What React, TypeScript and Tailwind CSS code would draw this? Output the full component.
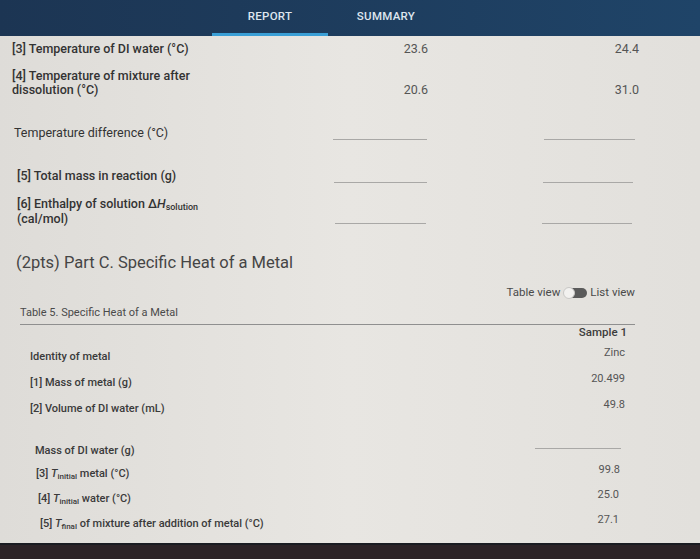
const font = { fontFamily: "Roboto, 'Liberation Sans', sans-serif" };

function Line({ w }: { w: string }) {
  return <div className={`${w} border-b border-[#a9a8a6]`} />;
}

function TSub({ sub }: { sub: string }) {
  return (
    <span>
      <i>T</i>
      <sub className="text-[8px]">{sub}</sub>
    </span>
  );
}

export default function App() {
  return (
    <div
      className="w-[700px] h-[559px] flex flex-col bg-gradient-to-r from-[#dedcd8] via-[#e8e6e2] to-[#e2e0dc] overflow-hidden"
      style={font}
    >
      {/* tab bar */}
      <div className="h-[36px] shrink-0 flex pl-[212px] bg-gradient-to-r from-[#1c3553] to-[#1f4468]">
        <div className="w-[116px] flex flex-col">
          <div className="flex-1 flex items-center justify-center text-[11.5px] font-medium tracking-wide text-[#dfe6ef]">
            REPORT
          </div>
          <div className="h-[3px] bg-[#3a9fd6]" />
        </div>
        <div className="w-[116px] flex items-center justify-center text-[11.5px] font-medium tracking-wide text-[#dfe6ef] pb-[3px]">
          SUMMARY
        </div>
      </div>

      <div className="flex-1 flex flex-col text-[12.5px] text-[#333]">
        {/* part B results */}
        <div className="flex h-[26px] items-center">
          <div className="w-[333px] pl-3 font-medium">[3] Temperature of DI water (°C)</div>
          <div className="w-[95px] text-right text-[#555]">23.6</div>
          <div className="w-[116px]" />
          <div className="w-[95px] text-right text-[#555]">24.4</div>
        </div>

        <div className="flex mt-[7px] items-end leading-[14px]">
          <div className="w-[333px] pl-3 font-medium">
            [4] Temperature of mixture after
            <br />
            dissolution (°C)
          </div>
          <div className="w-[95px] text-right text-[#555]">20.6</div>
          <div className="w-[116px]" />
          <div className="w-[95px] text-right text-[#555]">31.0</div>
        </div>

        <div className="flex mt-[26px] h-[20px] items-center">
          <div className="w-[333px] pl-[14px]">Temperature difference (°C)</div>
          <div className="self-start h-[17px] flex items-end">
            <Line w="w-[94px]" />
          </div>
          <div className="w-[117px]" />
          <div className="self-start h-[17px] flex items-end">
            <Line w="w-[91px]" />
          </div>
        </div>

        <div className="flex mt-[23px] h-[20px] items-center">
          <div className="w-[334px] pl-[17px] font-medium">[5] Total mass in reaction (g)</div>
          <div className="self-start h-[17px] flex items-end">
            <Line w="w-[93px]" />
          </div>
          <div className="w-[116px]" />
          <div className="self-start h-[17px] flex items-end">
            <Line w="w-[90px]" />
          </div>
        </div>

        <div className="flex mt-[10px] leading-[15px]">
          <div className="w-[335px] pl-[17px] font-medium">
            [6] Enthalpy of solution Δ<i>H</i>
            <sub className="text-[9px]">solution</sub>
            <br />
            (cal/mol)
          </div>
          <div className="self-end mb-[2px]">
            <Line w="w-[91px]" />
          </div>
          <div className="w-[116px]" />
          <div className="self-end mb-[2px]">
            <Line w="w-[90px]" />
          </div>
        </div>

        <div className="mt-[27px] pl-4 text-[16.5px] leading-[20px] text-[#454545]">
          (2pts) Part C. Specific Heat of a Metal
        </div>

        {/* table toggle */}
        <div className="mt-[12px] h-[16px] flex items-center justify-end pr-[65px] text-[11.5px] text-[#4a4a4a]">
          <span>Table view</span>
          <span className="mx-[3px] relative w-[24px] h-[12px] flex items-center">
            <span className="absolute right-0 w-[16px] h-[10px] rounded-r-full bg-[#5b5b5b]" />
            <span className="relative w-[12px] h-[12px] rounded-full bg-[#f2f1ef] border border-[#c9c8c6]" />
          </span>
          <span>List view</span>
        </div>

        {/* table 5 */}
        <div className="ml-[20px] w-[615px] flex flex-col">
          <div className="mt-[4px] pb-[3px] border-b border-[#8f8f8f] text-[11px] leading-[16px] text-[#4a4a4a]">
            Table 5. Specific Heat of a Metal
          </div>
          <div className="h-[14px] leading-[14px] text-right pr-[8px] text-[11.5px] font-medium text-[#3c3c3c]">
            Sample 1
          </div>

          <div className="mt-[6px] flex flex-col text-[11px] leading-[16px]">
            {[
              ["Identity of metal", "Zinc"],
              ["[1] Mass of metal (g)", "20.499"],
              ["[2] Volume of DI water (mL)", "49.8"],
            ].map(([l, v]) => (
              <div key={l} className="h-[26px] flex items-start">
                <div className="flex-1 pl-[10px] mt-[4px] font-medium text-[#3a3a3a]">{l}</div>
                <div className="pr-[10px] text-[#555]">{v}</div>
              </div>
            ))}

            <div className="mt-[16px] h-[23px] flex items-start">
              <div className="flex-1 pl-[15px] mt-[4px] font-medium text-[#3a3a3a]">Mass of DI water (g)</div>
              <div className="h-[10px] mr-[14px] flex items-end">
                <Line w="w-[86px]" />
              </div>
            </div>
            <div className="h-[25px] flex items-start">
              <div className="flex-1 pl-[16px] mt-[4px] font-medium text-[#3a3a3a]">
                [3] <TSub sub="initial" /> metal (°C)
              </div>
              <div className="pr-[15px] text-[#555]">99.8</div>
            </div>
            <div className="h-[25px] flex items-start">
              <div className="flex-1 pl-[18px] mt-[4px] font-medium text-[#3a3a3a]">
                [4] <TSub sub="initial" /> water (°C)
              </div>
              <div className="pr-[16px] text-[#555]">25.0</div>
            </div>
            <div className="h-[25px] flex items-start">
              <div className="flex-1 pl-[20px] mt-[4px] font-medium text-[#3a3a3a]">
                [5] <TSub sub="final" /> of mixture after addition of metal (°C)
              </div>
              <div className="pr-[16px] text-[#555]">27.1</div>
            </div>
          </div>
        </div>
      </div>

      {/* screen bezel */}
      <div className="h-[16px] shrink-0 bg-[#2c2327] border-t-2 border-[#1a1c22]" />
    </div>
  );
}
